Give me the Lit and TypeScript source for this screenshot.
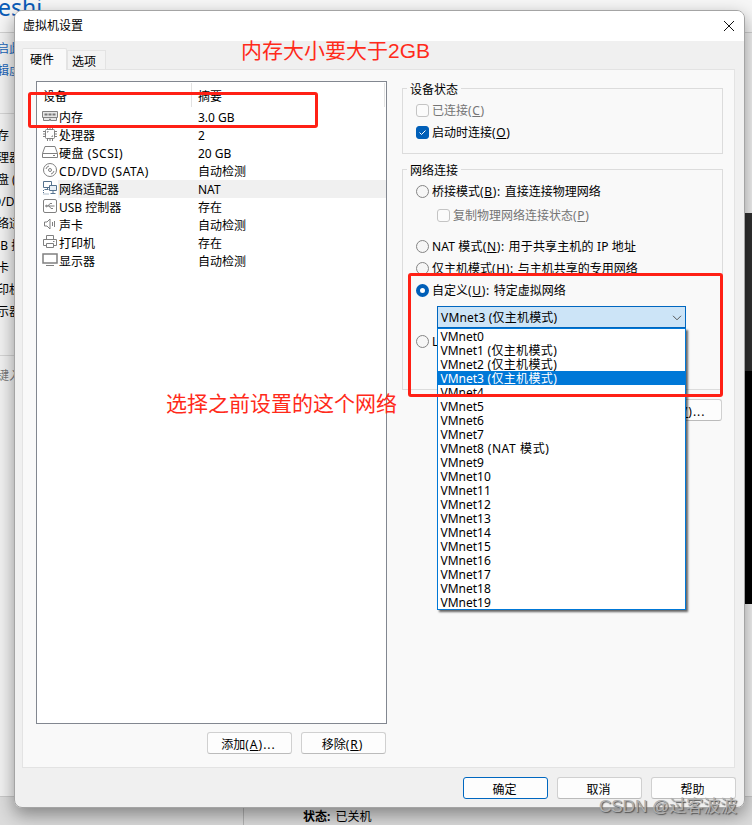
import { LitElement, html, css, svg } from "lit";
import { customElement, property } from "lit/decorators.js";

const font = css`"Noto Sans", "Noto Sans CJK SC", sans-serif`;

const icons: Record<string, unknown> = {
  memory: svg`<path d="M.5 3.500h15v6h-1v3h-6v-1.500h-1v1.500h-6v-3h-1z" fill="#e6e6e6"/><path d="M2.500 5.500h3v2h-3zM6.500 5.500h3v2h-3zM10.500 5.500h3v2h-3z" fill="#777" stroke="none"/><path d="M1 9.500h14"/>`,
  cpu: svg`<rect x="3.500" y="3.500" width="9" height="9" rx="1"/><path d="M5.500 1v2M8 1v2M10.500 1v2M5.500 13v2M8 13v2M10.500 13v2M1 5.500h2M1 8h2M1 10.500h2M13 5.500h2M13 8h2M13 10.500h2M5.500 6.500v-1h1M10.500 9.500v1h-1"/>`,
  disk: svg`<path d="M3 2.500h10l2.500 7v4H.5v-4zM.5 9.500h15M11 11.500h2"/>`,
  disc: svg`<circle cx="8" cy="8" r="6.500"/><circle cx="8" cy="8" r="1.500"/><path d="M4 7a4 4 0 0 1 3-3M12 9a4 4 0 0 1-3 3"/>`,
  net: svg`<g stroke="#56738f"><path d="M1.500 1.500h8v6h-8zM5.500 7.500v2M2.500 9.500h4"/><path d="M7.500 5.500h7v5h-7z" fill="#eaf1f7"/><path d="M11 10.500v3M8.500 13.500h5"/><path d="M1.500 10v4h6" stroke-dasharray="1 1"/></g>`,
  usb: svg`<rect x="1.500" y="1.500" width="13" height="13" rx="1.500"/><path d="M3.500 8h9M6 8l2-2.500h2M7 8l2 2.500h2"/><circle cx="4.500" cy="8" r=".8"/>`,
  sound: svg`<path d="M2.500 6v4h2.500l3 3V3L5 6zM10.500 6v4M12.500 5v6"/>`,
  printer: svg`<path d="M4.500 5.500v-4h7v4M4.500 11.500h-3v-6h13v6h-3M4.500 9.500h7v4h-7zM11 7.500h1.500"/>`,
  display: svg`<path d="M1 2h14v9H1z" stroke-width="1.500"/><path d="M4 13.500h8"/>`,
};

const devices = [
  ["memory", "内存", "3.0 GB"],
  ["cpu", "处理器", "2"],
  ["disk", "硬盘 (SCSI)", "20 GB"],
  ["disc", "CD/DVD (SATA)", "自动检测"],
  ["net", "网络适配器", "NAT"],
  ["usb", "USB 控制器", "存在"],
  ["sound", "声卡", "自动检测"],
  ["printer", "打印机", "存在"],
  ["display", "显示器", "自动检测"],
];

@customElement("vm-button")
class VmButton extends LitElement {
  @property() label = "";
  @property() hotkey = "";
  @property() tail = "";
  static styles = css`
    :host {
      display: flex; align-items: center; justify-content: center;
      box-sizing: border-box; width: 85px; height: 22px; flex: none;
      background: #fdfdfd; border: 1px solid #d0d0d0; border-bottom-color: #bbb; border-radius: 3px;
      padding: 3px 2px 0 0; white-space: pre;
    }
    :host([primary]) { border-color: #0067c0; }
    .key { letter-spacing: 1px; }
  `;
  render() {
    return html`<span>${this.label}<span class="key">${this.hotkey ? html`(<u>${this.hotkey}</u>)` : ""}${this.tail}</span></span>`;
  }
}

@customElement("vm-option")
class VmOption extends LitElement {
  @property() kind = "radio";
  @property() label = "";
  @property() hotkey = "";
  @property() tail = "";
  @property({ type: Boolean }) checked = false;
  static styles = css`
    :host { display: flex; align-items: center; gap: 3px; height: 20px; white-space: pre; }
    :host([disabled]) { color: #757575; }
    .mark { box-sizing: border-box; width: 13px; height: 13px; border: 1px solid #858585; background: #f6f6f6; flex: none; display: flex; align-items: center; justify-content: center; }
    .radio { border-radius: 50%; margin-bottom: 2px; }
    .check { border-radius: 3px; margin-bottom: 1px; }
    .radio.on { border: 4px solid #005fb8; background: #fff; }
    .check.on { border-color: #005fb8; background: #005fb8; }
    :host([disabled]) .mark { border-color: #c4c4c4; background: #fbfbfb; }
    svg { width: 9px; height: 9px; fill: none; stroke: #fff; }
    .key { letter-spacing: .65px; }
  `;
  render() {
    return html`<i class="mark ${this.kind} ${this.checked ? "on" : ""}">${
      this.checked && this.kind === "check" ? html`<svg viewBox="0 0 9 9"><path d="M1.500 4.500l2 2 4-4" /></svg>` : ""
    }</i><span>${this.label}<span class="key">(<u>${this.hotkey}</u>)${this.tail.slice(0, 2)}</span>${this.tail.slice(2)}</span>`;
  }
}

@customElement("vm-backdrop")
class VmBackdrop extends LitElement {
  static styles = css`
    :host { position: absolute; inset: 0; display: flex; flex-direction: column; overflow: hidden; background: #f1f1f1; white-space: nowrap; }
    .head { height: 33px; box-sizing: border-box; background: #f6f6f6; border-bottom: 1px solid #d0d0d0; }
    .name { margin-left: -13px; font-size: 23px; line-height: 15px; color: #0a5cb8; }
    .middle { flex: 1; display: flex; justify-content: space-between; }
    .side { margin-left: -15px; width: 200px; line-height: 22px; }
    .links { height: 81px; box-sizing: border-box; padding-top: 5px; color: #1763b8; border-bottom: 1px solid #d4d4d4; }
    .list { height: 242px; box-sizing: border-box; padding-top: 11px; border-bottom: 1px solid #d4d4d4; }
    .note { padding-top: 9px; color: #777; }
    .screen { width: 20px; height: 391px; margin-top: 180px; background: linear-gradient(#303030 0, #303030 158px, #000 158px); }
    .foot { height: 29px; box-sizing: border-box; display: flex; border-top: 1px solid #c8c8c8; background: #dcdcdc; }
    .cell { width: 243px; border-right: 1px solid #b4b4b4; }
    .state { padding: 11px 0 0 59px; line-height: 18px; }
    .state b { margin-right: 5px; }
  `;
  render() {
    return html`<div class="head"><div class="name">ceshi</div></div>
      <div class="middle">
        <div class="side">
          <div class="links"><div>开启此虚拟机</div><div>编辑虚拟机设置</div></div>
          <div class="list">${["内存", "处理器", "硬盘 (SCSI)", "CD/DVD", "网络适配器", "USB 控制器", "声卡", "打印机", "显示器"].map((t) => html`<div>${t}</div>`)}</div>
          <div class="note">按键入</div>
        </div>
        <div class="screen"></div>
      </div>
      <div class="foot"><div class="cell"></div><div class="state"><b>状态:</b>已关机</div></div>`;
  }
}

@customElement("vm-combo")
class VmCombo extends LitElement {
  static styles = css`
    :host { display: block; position: relative; width: 249px; height: 22px; white-space: pre; z-index: 1; }
    .field { height: 22px; box-sizing: border-box; border: 1px solid #0067c0; background: #cce4f7; padding: 2px 3px 0; display: flex; align-items: center; justify-content: space-between; letter-spacing: .18px; }
    .field svg { width: 10px; height: 6px; fill: none; stroke: #555; }
    .menu { position: absolute; left: 0; top: 22px; width: 249px; box-sizing: border-box; border: 1px solid #0078d7; background: #fff; box-shadow: 2px 2px 2px #0009; height: 282px; color: #000; }
    .item { height: 14px; line-height: 15px; padding-left: 2.500px; }
    .more { letter-spacing: .35px; }
    .item:nth-child(9) .more { letter-spacing: .6px; }
    .sel { background: #0078d7; color: #fff; }
  `;
  render() {
    const suffix: Record<number, string> = { 1: " (仅主机模式)", 2: " (仅主机模式)", 3: " (仅主机模式)", 8: " (NAT 模式)" };
    return html`<div class="field"><span>VMnet3 (仅主机模式)</span><svg viewBox="0 0 10 6"><path d="M1 .8l4 4 4-4" /></svg></div>
      <div class="menu">${Array.from({ length: 20 }, (_, i) => html`<div class="item ${i === 3 ? "sel" : ""}">VMnet${i}<span class="more">${suffix[i] ?? ""}</span></div>`)}</div>`;
  }
}

@customElement("app-root")
class AppRoot extends LitElement {
  static styles = css`
    :host { display: block; position: relative; width: 752px; height: 825px; overflow: hidden; font: 12px/18px ${font}; color: #000; }
    .dialog { position: absolute; left: 14px; top: 10px; width: 731px; height: 798px; box-sizing: border-box; border: 1px solid #a4a4a4; border-radius: 8px; overflow: hidden; background: #f0f0f0; display: flex; flex-direction: column; }
    .shade { position: absolute; left: 14px; top: 10px; width: 731px; height: 798px; border-radius: 8px; box-shadow: 0 7px 18px #0006; }
    .title { height: 30px; background: #fff; display: flex; align-items: center; justify-content: space-between; padding: 0 9px 0 8px; }
    .title svg { width: 12px; height: 12px; margin-bottom: 1px; stroke: #111; fill: none; }
    .tabs { height: 28px; display: flex; align-items: flex-end; padding-left: 7px; }
    .tab { box-sizing: border-box; border: 1px solid #e3e3e3; border-bottom: 0; height: 19px; width: 39px; padding-left: 4px; line-height: 21px; background: #f3f3f3; }
    .tab.on { width: 45px; height: 22px; margin-bottom: -1px; padding-left: 7px; line-height: 22px; background: #f9f9f9; z-index: 1; border-radius: 2px 2px 0 0; }
    .panel { height: 699px; box-sizing: border-box; margin: 0 9px 0 7px; border: 1px solid #e3e3e3; background: #f9f9f9; padding: 11px 11px 0 13px; display: flex; justify-content: space-between; }
    .left { width: 351px; }
    .table { height: 643px; box-sizing: border-box; border: 1px solid #828790; background: #fff; }
    .row { display: grid; grid-template-columns: 21px 1fr 189px; height: 18px; align-items: center; white-space: pre; }
    .row span { height: 18px; line-height: 19px; padding-left: 1px; }
    .row svg { width: 16px; height: 16px; margin: 0 0 2px 5px; fill: none; stroke: #808080; }
    .thead { height: 26px; grid-template-columns: 154px 1fr; }
    .row.thead span { height: 24px; line-height: 28px; padding-left: 6px; }
    .thead span + span { border-left: 1px solid #e2e2e2; border-right: 1px solid #e2e2e2; margin-right: 1px; }
    .disk .wide, .disc .wide { letter-spacing: .55px; }
    .hot span { background: #f0f0f0; }
    .btns { display: flex; justify-content: flex-end; gap: 9px; padding: 8px 1px 0 0; }
    .right { width: 321px; padding-top: 7px; }
    .group { box-sizing: border-box; border: 1px solid #dcdcdc; padding-left: 13px; position: relative; }
    .legend { position: absolute; left: 4px; top: -8px; padding: 0 3px; background: #f9f9f9; }
    .g1 { height: 66px; padding-top: 12px; display: flex; flex-direction: column; gap: 2px; }
    .g2 { height: 221px; margin-top: 15px; padding-top: 12px; }
    .indent { padding-left: 21px; }
    .s1 { margin-top: 4px; }
    .s2 { margin-top: 11px; letter-spacing: .15px; }
    .s3 { margin-top: 2px; }
    .s4 { margin-top: 5px; }
    .s5 { margin-top: 4px; }
    .adv { display: flex; justify-content: flex-end; padding: 9px 1px 0 0; }
    .footer { display: flex; justify-content: flex-end; gap: 9px; padding: 9px 8px 0 0; }
    .box { position: absolute; box-sizing: border-box; border: 3px solid #ff2015; border-radius: 3px; z-index: 3; }
    .b1 { left: 28px; top: 92px; width: 290px; height: 36px; }
    .b2 { left: 408px; top: 273px; width: 315px; height: 124px; }
    .memo { position: absolute; color: #ff2a1a; font-size: 21px; line-height: 28px; white-space: nowrap; z-index: 3; font-family: "Liberation Sans", "Noto Sans CJK SC", sans-serif; }
    .m1 { left: 241px; top: 37px; }
    .m2 { left: 166px; top: 390px; }
    .mark { position: absolute; left: 599px; top: 795px; font: 17px/24px "Liberation Sans", "Noto Sans CJK SC", sans-serif; color: #b0b0b0; text-shadow: 1px 1px 1px #555; white-space: nowrap; z-index: 3; }
  `;
  render() {
    return html`
      <vm-backdrop></vm-backdrop>
      <div class="shade"></div>
      <div class="dialog">
        <div class="title"><span>虚拟机设置</span><svg viewBox="0 0 12 12"><path d="M1 1l10 10M11 1L1 11" /></svg></div>
        <div class="tabs"><div class="tab on">硬件</div><div class="tab">选项</div></div>
        <div class="panel">
          <div class="left">
            <div class="table">
              <div class="row thead"><span>设备</span><span>摘要</span></div>
              ${devices.map(([icon, name, info]) => html`<div class="row ${icon} ${icon === "net" ? "hot" : ""}">
                <svg viewBox="0 0 16 16">${icons[icon]}</svg><span class="wide">${name}</span><span>${info}</span></div>`)}
            </div>
            <div class="btns">
              <vm-button label="添加" hotkey="A" tail="..."></vm-button>
              <vm-button label="移除" hotkey="R"></vm-button>
            </div>
          </div>
          <div class="right">
            <div class="group g1">
              <span class="legend">设备状态</span>
              <vm-option kind="check" label="已连接" hotkey="C" disabled></vm-option>
              <vm-option kind="check" label="启动时连接" hotkey="O" checked></vm-option>
            </div>
            <div class="group g2">
              <span class="legend">网络连接</span>
              <vm-option label="桥接模式" hotkey="B" tail=": 直接连接物理网络"></vm-option>
              <vm-option class="indent s1" kind="check" label="复制物理网络连接状态" hotkey="P" disabled></vm-option>
              <vm-option class="s2" label="NAT 模式" hotkey="N" tail=": 用于共享主机的 IP 地址"></vm-option>
              <vm-option class="s3" label="仅主机模式" hotkey="H" tail=": 与主机共享的专用网络"></vm-option>
              <vm-option class="s3" label="自定义" hotkey="U" tail=": 特定虚拟网络" checked></vm-option>
              <div class="indent s4"><vm-combo></vm-combo></div>
              <vm-option class="s5" label="LAN 区段" hotkey="L" tail=":"></vm-option>
            </div>
            <div class="adv"><vm-button label="高级" hotkey="V" tail="..."></vm-button></div>
          </div>
        </div>
        <div class="footer">
          <vm-button primary label="确定"></vm-button>
          <vm-button label="取消"></vm-button>
          <vm-button label="帮助"></vm-button>
        </div>
      </div>
      <div class="box b1"></div>
      <div class="box b2"></div>
      <div class="memo m1">内存大小要大于2GB</div>
      <div class="memo m2">选择之前设置的这个网络</div>
      <div class="mark">CSDN @过客波波</div>
    `;
  }
}
